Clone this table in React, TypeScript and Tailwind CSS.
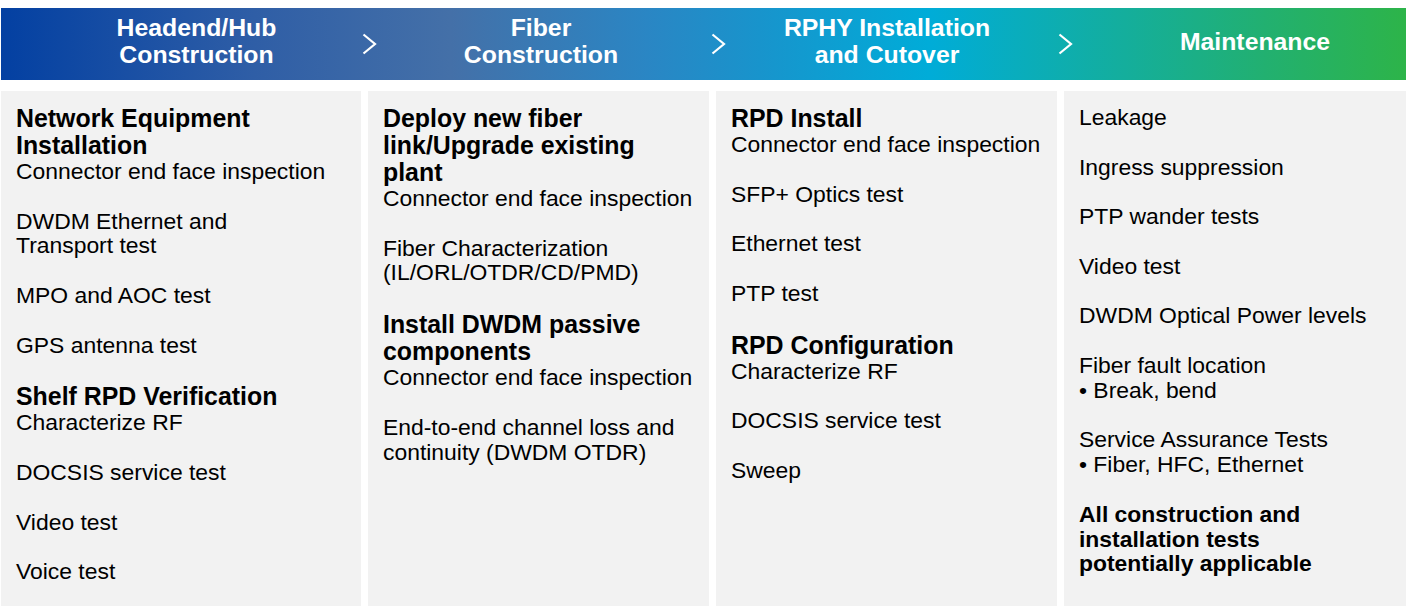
import React from "react";

type Item = { lines: string[]; bold?: boolean };
type Block = { title?: string[]; items: Item[] };

const p = (...lines: string[]): Item => ({ lines });

const panels: Block[][] = [
  [
    {
      title: ["Network Equipment", "Installation"],
      items: [
        p("Connector end face inspection"),
        p("DWDM Ethernet and", "Transport test"),
        p("MPO and AOC test"),
        p("GPS antenna test"),
      ],
    },
    {
      title: ["Shelf RPD Verification"],
      items: [p("Characterize RF"), p("DOCSIS service test"), p("Video test"), p("Voice test")],
    },
  ],
  [
    {
      title: ["Deploy new fiber", "link/Upgrade existing", "plant"],
      items: [p("Connector end face inspection"), p("Fiber Characterization", "(IL/ORL/OTDR/CD/PMD)")],
    },
    {
      title: ["Install DWDM passive", "components"],
      items: [p("Connector end face inspection"), p("End-to-end channel loss and", "continuity (DWDM OTDR)")],
    },
  ],
  [
    {
      title: ["RPD Install"],
      items: [p("Connector end face inspection"), p("SFP+ Optics test"), p("Ethernet test"), p("PTP test")],
    },
    {
      title: ["RPD Configuration"],
      items: [p("Characterize RF"), p("DOCSIS service test"), p("Sweep")],
    },
  ],
  [
    {
      items: [
        p("Leakage"),
        p("Ingress suppression"),
        p("PTP wander tests"),
        p("Video test"),
        p("DWDM Optical Power levels"),
        p("Fiber fault location", "• Break, bend"),
        p("Service Assurance Tests", "• Fiber, HFC, Ethernet"),
        { lines: ["All construction and", "installation tests", "potentially applicable"], bold: true },
      ],
    },
  ],
];

function Chevron() {
  return (
    <svg width="15" height="22" viewBox="0 0 15 22" className="shrink-0 self-center">
      <path d="M1.5 1.5 L13 11 L1.5 20.5" fill="none" stroke="white" strokeWidth="2.2" />
    </svg>
  );
}

function Panel({ blocks, w }: { blocks: Block[]; w: string }) {
  return (
    <div className={`${w} h-[515px] bg-[#f2f2f2] pl-[15px] pt-[14px] text-black`}>
      {blocks.map((b, bi) => (
        <div key={bi} className={bi > 0 ? "mt-[26px]" : ""}>
          {b.title && (
            <div className="text-[24.9px] leading-[27px] font-bold whitespace-nowrap">
              {b.title.map((t, i) => (
                <div key={i}>{t}</div>
              ))}
            </div>
          )}
          {b.items.map((it, ii) => (
            <div
              key={ii}
              className={`text-[22.9px] leading-[24.8px] whitespace-nowrap ${it.bold ? "font-bold" : ""} ${
                ii > 0 ? "mt-[24.8px]" : ""
              }`}
            >
              {it.lines.map((t, i) => (
                <div key={i}>{t}</div>
              ))}
            </div>
          ))}
        </div>
      ))}
    </div>
  );
}

export default function App() {
  return (
    <div className="w-[1407px] h-[607px] bg-white font-['Liberation_Sans',Arial,sans-serif] overflow-hidden">
      <div className="mx-[1px] mt-[8px] h-[72px] flex bg-[linear-gradient(90deg,#0340a2_0%,#2f5ea6_18%,#4470a8_32%,#2a86c4_46%,#1894cc_54%,#00acd8_66%,#14ae9c_80%,#22b070_90%,#2db449_100%)] text-white font-bold text-[24.8px] leading-[27px]">
        <div className="w-[361px] pl-[30px] pb-[6px] flex flex-col items-center justify-center text-center">
          <div>Headend/Hub</div>
          <div>Construction</div>
        </div>
        <Chevron />
        <div className="w-[334px] pr-[6px] pb-[6px] flex flex-col items-center justify-center text-center">
          <div>Fiber</div>
          <div>Construction</div>
        </div>
        <Chevron />
        <div className="w-[332px] pr-[10px] pb-[6px] flex flex-col items-center justify-center text-center">
          <div>RPHY Installation</div>
          <div>and Cutover</div>
        </div>
        <Chevron />
        <div className="flex-1 pl-[31px] pb-[6px] flex flex-col items-center justify-center text-center">
          <div>Maintenance</div>
        </div>
      </div>
      <div className="mx-[1px] mt-[11px] flex gap-[7px]">
        <Panel blocks={panels[0]} w="w-[360px]" />
        <Panel blocks={panels[1]} w="w-[341px]" />
        <Panel blocks={panels[2]} w="w-[341px]" />
        <Panel blocks={panels[3]} w="w-[342px]" />
      </div>
    </div>
  );
}
